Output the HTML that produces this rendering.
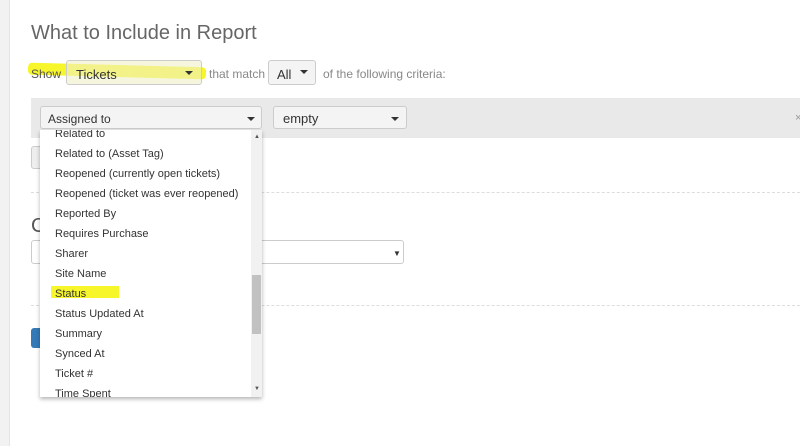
<html><head><style>
body{margin:0;width:800px;height:446px;background:#fff;font-family:"Liberation Sans",sans-serif;position:relative;overflow:hidden}
.a{position:absolute}
.sel{position:absolute;background:#f4f4f4;border:1px solid #ccc;border-radius:3px;box-sizing:border-box;font-size:13px;color:#333}
.car{position:absolute;width:0;height:0;border-left:4px solid transparent;border-right:4px solid transparent;border-top:4px solid #333}
.it{position:absolute;left:15px;font-size:11px;color:#333}
</style></head><body>
<div class="a" style="left:0;top:0;width:9px;height:446px;background:#f2f2f2;border-right:1px solid #e4e4e4"></div>
<div class="a" style="left:31px;top:22px;font-size:20px;color:#666">What to Include in Report</div>
<div class="a" style="left:28px;top:65px;width:178px;height:12px;background:#f6f62a;transform:rotate(1.5deg);border-radius:4px"></div>
<div class="a" style="left:31px;top:67px;font-size:12px;color:#555">Show</div>
<div class="sel" style="left:66px;top:60px;width:136px;height:25px;background:rgba(240,240,200,0.6)"><span class="a" style="left:9px;top:6px">Tickets</span><div class="car" style="left:118px;top:10px"></div></div>
<div class="a" style="left:209px;top:67px;font-size:12px;color:#888">that match</div>
<div class="sel" style="left:268px;top:60px;width:48px;height:25px"><span class="a" style="left:8px;top:6px">All</span><div class="car" style="left:31px;top:9px"></div></div>
<div class="a" style="left:323px;top:67px;font-size:12px;color:#888">of the following criteria:</div>
<div class="a" style="left:31px;top:98px;width:769px;height:40px;background:#e9e9e9"></div>
<div class="a" style="left:795px;top:112px;font-size:11px;color:#999">×</div>
<div class="sel" style="left:40px;top:106px;width:222px;height:23px"><span class="a" style="left:7px;top:5px;font-size:12px">Assigned to</span><div class="car" style="left:206px;top:10px"></div></div>
<div class="sel" style="left:273px;top:106px;width:134px;height:23px"><span class="a" style="left:9px;top:4px">empty</span><div class="car" style="left:117px;top:10px"></div></div>
<div class="a" style="left:31px;top:146px;width:12px;height:21px;background:#eee;border:1px solid #ccc;border-radius:3px"></div>
<div class="a" style="left:31px;top:192px;width:769px;border-top:1px dashed #ddd"></div>
<div class="a" style="left:31px;top:215px;font-size:20px;color:#555">C</div>
<div class="a" style="left:31px;top:240px;width:373px;height:24px;border:1px solid #ccc;border-radius:3px;box-sizing:border-box"></div>
<div class="a" style="left:393px;top:249px;font-size:8px;color:#333">▼</div>
<div class="a" style="left:31px;top:305px;width:769px;border-top:1px dashed #ddd"></div>
<div class="a" style="left:31px;top:328px;width:12px;height:20px;background:#337ab7;border-radius:3px"></div>
<div class="a" style="left:40px;top:130px;width:222px;height:267px;background:#fff;box-shadow:0 2px 4px rgba(0,0,0,0.3);overflow:hidden">
<div class="a" style="left:11px;top:156px;width:68px;height:12px;background:#f6f62a"></div>
<div class="it" style="top:-2px">Related to</div>
<div class="it" style="top:18px">Related to (Asset Tag)</div>
<div class="it" style="top:38px">Reopened (currently open tickets)</div>
<div class="it" style="top:58px">Reopened (ticket was ever reopened)</div>
<div class="it" style="top:78px">Reported By</div>
<div class="it" style="top:98px">Requires Purchase</div>
<div class="it" style="top:118px">Sharer</div>
<div class="it" style="top:138px">Site Name</div>
<div class="it" style="top:158px">Status</div>
<div class="it" style="top:178px">Status Updated At</div>
<div class="it" style="top:198px">Summary</div>
<div class="it" style="top:218px">Synced At</div>
<div class="it" style="top:238px">Ticket #</div>
<div class="it" style="top:258px">Time Spent</div>
<div class="a" style="left:211px;top:0;width:11px;height:267px;background:#f1f1f1"></div>
<div class="a" style="left:212px;top:145px;width:9px;height:59px;background:#c1c1c1"></div>
<div class="a" style="left:214px;top:4px;font-size:6px;color:#555">▲</div>
<div class="a" style="left:214px;top:256px;font-size:6px;color:#555">▼</div>
</div>
</body></html>
